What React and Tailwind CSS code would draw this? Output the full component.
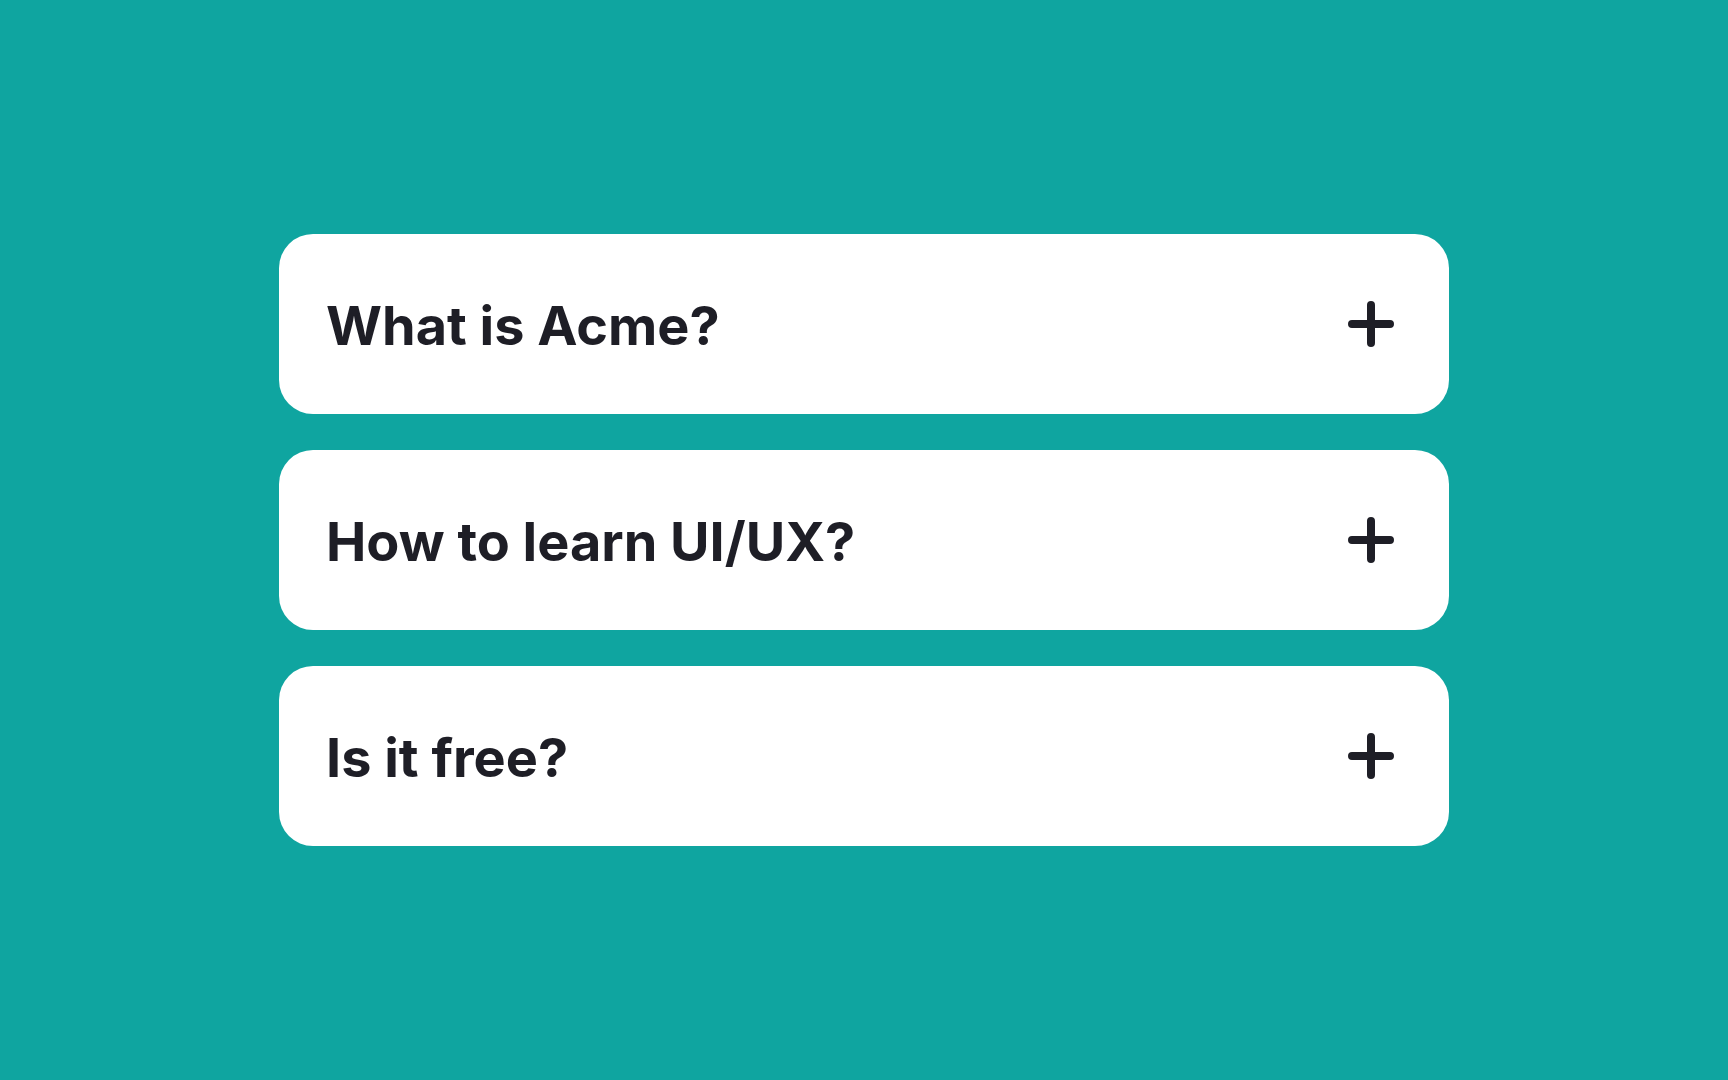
const questions = ["What is Acme?", "How to learn UI/UX?", "Is it free?"];

function PlusIcon() {
  return (
    <svg width="46" height="46" viewBox="0 0 46 46" fill="none">
      <path d="M23 4v38M4 23h38" stroke="#1e1e26" strokeWidth="8" strokeLinecap="round" />
    </svg>
  );
}

export default function App() {
  return (
    <div className="min-h-screen w-full bg-[#0fa5a0] flex items-center justify-center" style={{ fontFamily: "Inter, 'Noto Sans', sans-serif" }}>
      <div className="w-[1170px] flex flex-col gap-9">
        {questions.map((q) => (
          <button
            key={q}
            className="h-[180px] w-full bg-white rounded-[34px] flex items-center justify-between pl-[47px] pr-[55px] text-left"
          >
            <span className="mt-1 text-[54px] font-bold text-[#1e1e26] leading-none">{q}</span>
            <PlusIcon />
          </button>
        ))}
      </div>
    </div>
  );
}
